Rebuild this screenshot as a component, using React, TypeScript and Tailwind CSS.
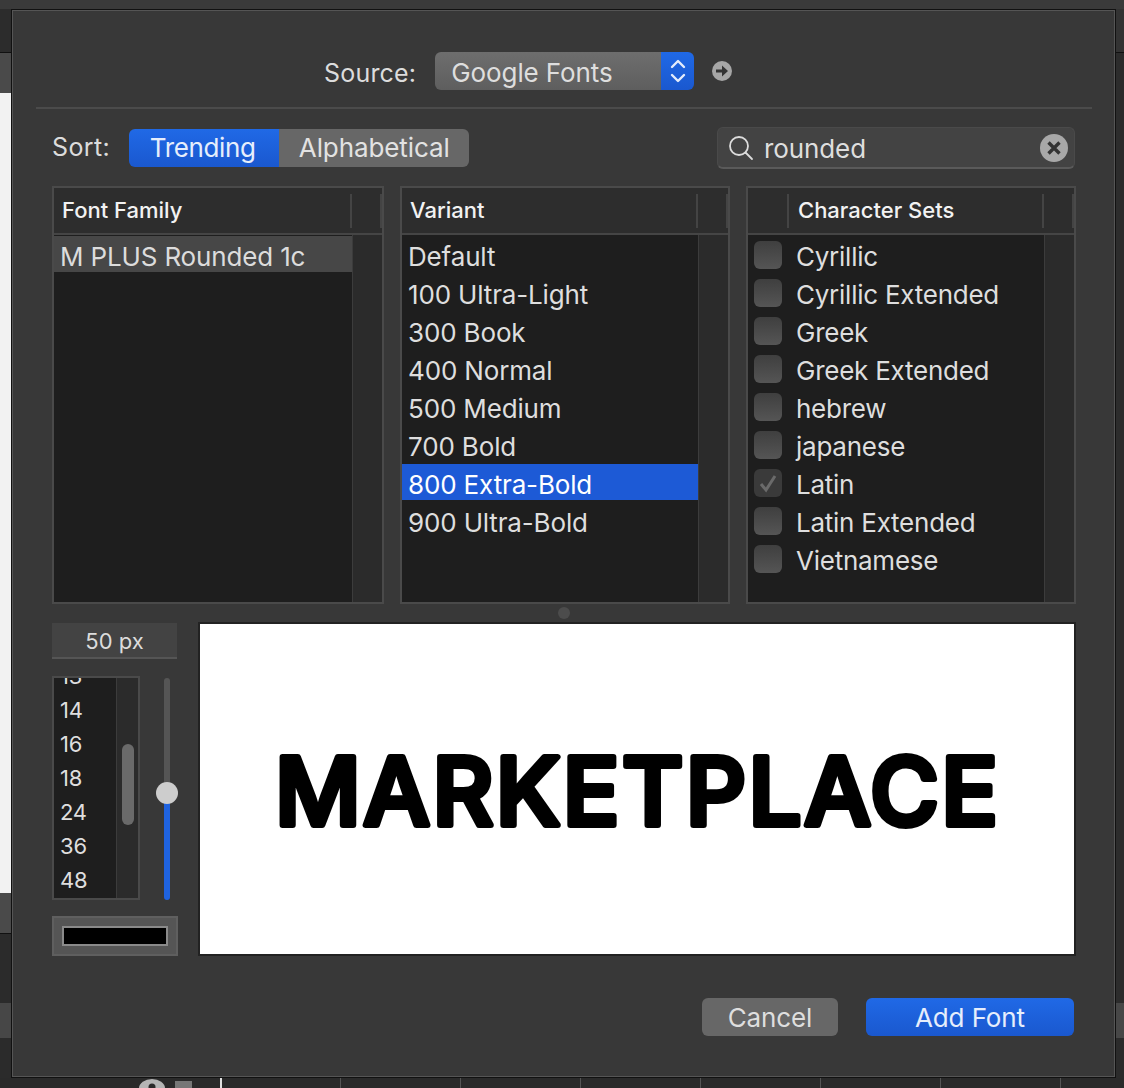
const font = { fontFamily: 'Inter, "Noto Sans", sans-serif' };

function HeaderSep() {
  return <div className="w-[2px] h-[34px] bg-[#444444]" />;
}

function Panel({ title, checks, width, children }: { title: string; checks?: boolean; width: string; children: React.ReactNode }) {
  return (
    <div className={`${width} h-[418px] flex flex-col border-2 border-[#4a4a4a]`}>
      <div className="h-[47px] shrink-0 flex items-center bg-[#2d2d2d] border-b-2 border-[#454545]">
        {checks && <div className="w-[39px] shrink-0" />}
        {checks && <HeaderSep />}
        <div className={`flex-1 font-medium text-[22px] tracking-[0px] text-[#f2f2f2] ${checks ? 'pl-[9px]' : 'pl-[8px]'}`}>{title}</div>
        <HeaderSep />
        <div className="w-[28px]" />
        <HeaderSep />
      </div>
      <div className="flex-1 flex min-h-0">
        <div className="flex-1 bg-[#1e1e1e] pt-[2px] min-w-0">{children}</div>
        <div className="w-[30px] shrink-0 bg-[#2b2b2b] border-l border-[#3c3c3c]" />
      </div>
    </div>
  );
}

function Row({ children, selected, sub }: { children: string; selected?: boolean; sub?: boolean }) {
  if (selected || sub) {
    return (
      <div className={`-mt-[1px] mb-[3px] h-[36px] pt-[4px] flex items-center pl-[6px] text-[26px] tracking-[-0.15px] ${selected ? 'bg-[#1d5ad6] text-white' : 'bg-[#474747] text-[#dcdcdc]'}`}>
        {children}
      </div>
    );
  }
  return <div className="h-[38px] flex items-center pl-[6px] text-[26px] tracking-[-0.15px] text-[#dedede]">{children}</div>;
}

function CheckRow({ label, checked }: { label: string; checked?: boolean }) {
  return (
    <div className="h-[38px] flex items-center pl-[6px] gap-[14px] text-[26px] tracking-[-0.25px] text-[#dedede]">
      <div className={`w-[28px] h-[28px] -mt-[2px] rounded-[6px] flex items-center justify-center ${checked ? 'bg-[#3a3a3a]' : 'bg-gradient-to-b from-[#3f3f3f] to-[#555555]'}`}>
        {checked && (
          <svg width="20" height="20" viewBox="0 0 20 20" fill="none">
            <path d="M3 11 L8 17 L17 3" stroke="#6a6a6a" strokeWidth="3" />
          </svg>
        )}
      </div>
      <span>{label}</span>
    </div>
  );
}

export default function App() {
  return (
    <div style={font} className="w-[1124px] h-[1088px] overflow-hidden flex flex-col bg-[#2a2a2a]">
      <div className="h-[9px] shrink-0 bg-[#3a3a3a]" />
      <div className="flex-1 flex min-h-0">
        <div className="w-[11px] shrink-0 flex flex-col">
          <div className="h-[43px] bg-[#2c2c2c]" />
          <div className="h-[41px] bg-[#4a4a4a] border-t border-[#111111]" />
          <div className="h-[800px] bg-[#f2f2f2]" />
          <div className="h-[40px] bg-[#4a4a4a]" />
          <div className="h-[70px] bg-[#2b2b2b] border-t border-[#111111]" />
          <div className="h-[35px] bg-[#474747]" />
          <div className="flex-1 bg-[#2b2b2b]" />
        </div>

        <div className="w-[1105px] shrink-0 flex flex-col bg-[#383838] border border-[#111111] shadow-[inset_0_0_0_1px_#555555] pl-[40px] pr-[39px] pt-[42px] relative">
          {/* Source */}
          <div className="h-[38px] flex items-center">
            <span className="ml-[272px] mt-[6px] text-[25px] tracking-[0.2px] text-[#dcdcdc]">Source:</span>
            <div className="ml-[19px] w-[259px] h-[38px] rounded-[6px] overflow-hidden flex">
              <div className="flex-1 bg-gradient-to-b from-[#6e6e6e] to-[#5e5e5e] pl-[16px] pt-[2px] flex items-center text-[26px] tracking-[-0.1px] text-[#dedede]">Google Fonts</div>
              <div className="w-[33px] bg-gradient-to-b from-[#2069e6] to-[#1a58cf] flex items-center justify-center">
                <svg width="18" height="26" viewBox="0 0 18 26" fill="none" stroke="#e4ecfb" strokeWidth="2.4" strokeLinecap="round" strokeLinejoin="round">
                  <path d="M3 9 L9 3 L15 9" />
                  <path d="M3 17 L9 23 L15 17" />
                </svg>
              </div>
            </div>
            <svg className="ml-[18px]" width="20" height="20" viewBox="0 0 20 20">
              <circle cx="10" cy="10" r="10" fill="#a6a6a6" />
              <path d="M4 8.4 H10 V4.6 L16 10 L10 15.4 V11.6 H4 Z" fill="#333333" />
            </svg>
          </div>

          <div className="h-[2px] bg-[#4b4b4b] mt-[17px] -ml-[16px] -mr-[16px]" />

          {/* Sort + search */}
          <div className="mt-[18px] h-[42px] flex items-center">
            <span className="text-[25px] tracking-[0.4px] text-[#dcdcdc]">Sort:</span>
            <div className="ml-[19px] -mt-[1px] h-[38px] rounded-[6px] overflow-hidden flex text-[26px] tracking-[-0.1px]">
              <div className="w-[150px] pr-[3px] tracking-[-0.35px] bg-gradient-to-b from-[#2069e6] to-[#1a58cf] flex items-center justify-center text-[#e6eefc]">Trending</div>
              <div className="w-[190px] bg-[#676767] flex items-center justify-center text-[#e2e2e2]">Alphabetical</div>
            </div>
            <div className="ml-auto mr-[1px] w-[358px] h-[42px] rounded-[6px] bg-[#434343] border border-[#4a4a4a] border-b-2 border-b-[#5a5a5a] flex items-center pl-[10px] pr-[6px]">
              <svg width="26" height="26" viewBox="0 0 26 26" fill="none" stroke="#dcdcdc" strokeWidth="1.8" strokeLinecap="round">
                <circle cx="11" cy="11" r="9" />
                <path d="M17.5 17.5 L24 24" />
              </svg>
              <span className="ml-[10px] pt-[2px] text-[26px] tracking-[-0.1px] text-[#dedede]">rounded</span>
              <svg className="ml-auto" width="28" height="28" viewBox="0 0 28 28" fill="none">
                <circle cx="14" cy="14" r="14" fill="#a8a8a8" />
                <path d="M8.5 8.5 L19.5 19.5 M19.5 8.5 L8.5 19.5" stroke="#333333" strokeWidth="3.4" />
              </svg>
            </div>
          </div>

          {/* Lists */}
          <div className="mt-[17px] flex gap-[16px]">
            <Panel title="Font Family" width="w-[332px]">
              <Row sub>M PLUS Rounded 1c</Row>
            </Panel>
            <Panel title="Variant" width="w-[330px]">
              <Row>Default</Row>
              <Row>100 Ultra-Light</Row>
              <Row>300 Book</Row>
              <Row>400 Normal</Row>
              <Row>500 Medium</Row>
              <Row>700 Bold</Row>
              <Row selected>800 Extra-Bold</Row>
              <Row>900 Ultra-Bold</Row>
            </Panel>
            <Panel title="Character Sets" checks width="w-[330px]">
              <CheckRow label="Cyrillic" />
              <CheckRow label="Cyrillic Extended" />
              <CheckRow label="Greek" />
              <CheckRow label="Greek Extended" />
              <CheckRow label="hebrew" />
              <CheckRow label="japanese" />
              <CheckRow label="Latin" checked />
              <CheckRow label="Latin Extended" />
              <CheckRow label="Vietnamese" />
            </Panel>
          </div>

          {/* Split dot */}
          <div className="h-[18px] flex items-center justify-center">
            <div className="w-[12px] h-[12px] rounded-full bg-[#4c4c4c]" />
          </div>

          {/* Bottom */}
          <div className="flex gap-[20px] h-[334px]">
            <div className="w-[126px] shrink-0 flex flex-col">
              <div className="mt-[1px] w-[125px] h-[36px] pt-[3px] bg-[#434343] border-b-2 border-[#555555] flex items-center justify-center text-[22px] text-[#dcdcdc] tracking-[0px]">50 px</div>
              <div className="mt-[17px] flex h-[224px]">
                <div className="w-[88px] h-full border-2 border-[#4a4a4a] flex overflow-hidden">
                  <div className="flex-1 bg-[#1e1e1e] pl-[6px] text-[22px] text-[#dedede] overflow-hidden tracking-[-0.2px]">
                    <div className="-mt-[19px]">
                      {['13', '14', '16', '18', '24', '36', '48'].map((s) => (
                        <div key={s} className="h-[34px] flex items-center">{s}</div>
                      ))}
                    </div>
                  </div>
                  <div className="w-[22px] shrink-0 bg-[#2b2b2b] border-l border-[#3c3c3c] pl-[5px] pt-[66px]">
                    <div className="w-[12px] h-[81px] rounded-full bg-[#6a6a6a]" />
                  </div>
                </div>
                <div className="ml-[16px] w-[22px] h-full flex flex-col items-center relative pt-[2px]">
                  <div className="w-[6px] h-[110px] rounded-t-full bg-[#555555]" />
                  <div className="w-[6px] flex-1 rounded-b-full bg-[#1f63e0]" />
                  <div className="absolute left-0 top-[106px] w-[22px] h-[22px] rounded-full bg-[#cdcdcd]" />
                </div>
              </div>
              <div className="mt-[16px] h-[40px] bg-[#555555] border-2 border-[#5f5f5f] p-[8px]">
                <div className="h-full bg-black border-2 border-[#8a8a8a]" />
              </div>
            </div>
            <div className="w-[878px] shrink-0 bg-white border-2 border-[#222222] flex items-center justify-center">
              <svg width="874" height="330" viewBox="0 0 874 330">
                <text x="75" y="201" textLength="723" lengthAdjust="spacing" fontFamily="Inter, sans-serif" fontWeight="500" fontSize="94" fill="#000" stroke="#000" strokeWidth="6" strokeLinejoin="round">MARKETPLACE</text>
              </svg>
            </div>
          </div>

          {/* Buttons */}
          <div className="mt-[42px] flex justify-end gap-[28px] pr-[2px]">
            <div className="w-[136px] h-[38px] rounded-[6px] bg-[#676767] flex items-center justify-center text-[26px] tracking-[-0.1px] text-[#dedede]">Cancel</div>
            <div className="w-[208px] h-[38px] rounded-[6px] bg-gradient-to-b from-[#2069e6] to-[#1a58cf] flex items-center justify-center text-[26px] tracking-[-0.1px] text-[#e6eefc]">Add Font</div>
          </div>
        </div>

        <div className="flex-1 flex flex-col">
          <div className="h-[43px] bg-[#333333]" />
          <div className="h-[1px] bg-[#111111]" />
          <div className="h-[950px] bg-[#2c2c2c]" />
          <div className="h-[35px] bg-[#474747]" />
          <div className="flex-1 bg-[#2b2b2b]" />
        </div>
      </div>
      <div className="h-[10px] shrink-0 bg-[#2a2a2a] flex relative overflow-hidden">
        <svg className="absolute left-[139px] top-0" width="60" height="10" viewBox="0 0 60 10">
          <ellipse cx="13" cy="10" rx="13" ry="9" fill="#b5b5b5" />
          <circle cx="13" cy="9" r="3.5" fill="#2a2a2a" />
          <rect x="36" y="3" width="17" height="7" fill="#777777" />
        </svg>
        <div className="absolute left-[220px] top-0 w-[2px] h-full bg-[#e0e0e0]" />
        {[340, 460, 580, 700, 820, 940, 1060].map((x) => (
          <div key={x} style={{ left: x }} className="absolute top-0 w-[1px] h-full bg-[#555555]" />
        ))}
      </div>
    </div>
  );
}
